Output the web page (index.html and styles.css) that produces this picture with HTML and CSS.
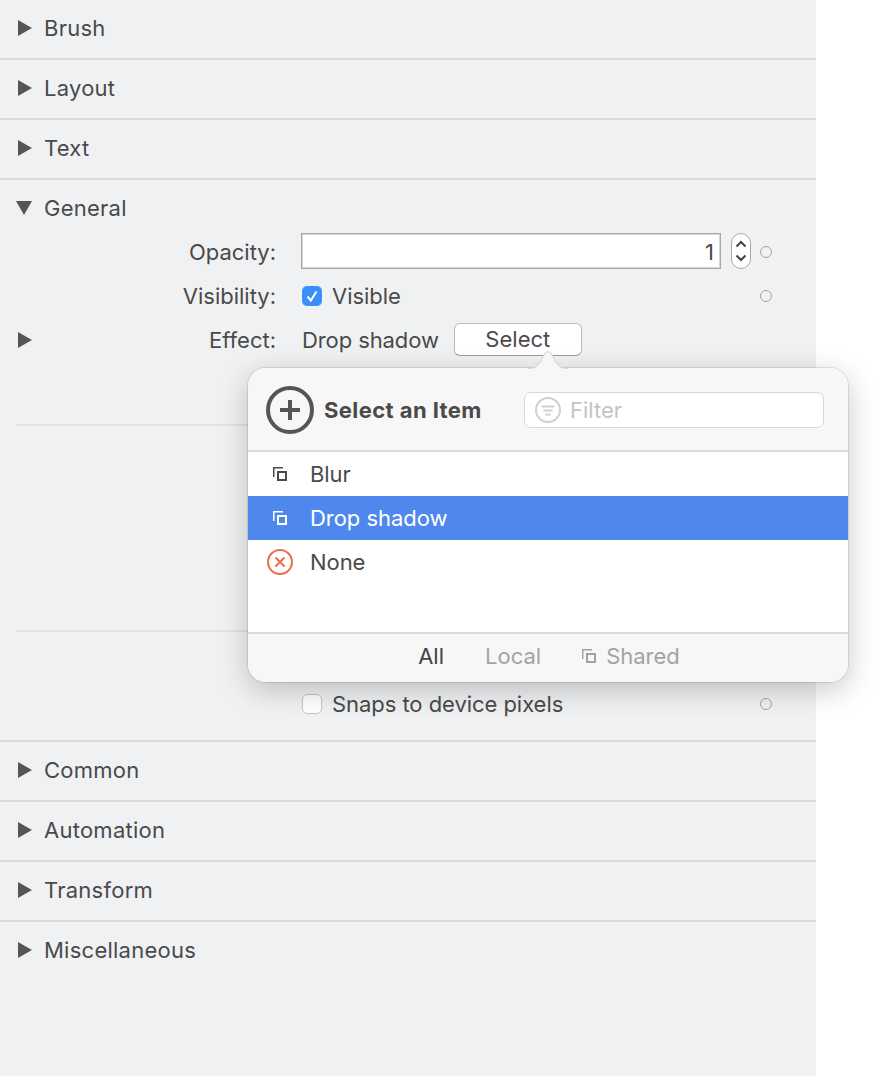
FILE: index.html
```html
<!DOCTYPE html>
<html lang="en">
<head>
<meta charset="utf-8">
<title>Properties</title>
<link rel="stylesheet" href="styles.css">
</head>
<body>
<svg class="defs" width="0" height="0" aria-hidden="true">
  <symbol id="tri-right" viewBox="0 0 14 16"><path d="M0 0L14 8L0 16Z"/></symbol>
  <symbol id="tri-down" viewBox="0 0 16 14"><path d="M0 0H16L8 14Z"/></symbol>
  <symbol id="copy" viewBox="0 0 14 14"><path d="M.75 10V.75H10" fill="none" stroke="currentColor" stroke-width="1.5"/><rect x="5" y="5" width="8" height="8" fill="none" stroke="currentColor" stroke-width="2"/></symbol>
</svg>
<main class="panel">
  <section class="section"><header class="head"><svg class="tri"><use href="#tri-right"/></svg>Brush</header></section>
  <section class="section"><header class="head"><svg class="tri"><use href="#tri-right"/></svg>Layout</header></section>
  <section class="section"><header class="head"><svg class="tri"><use href="#tri-right"/></svg>Text</header></section>
  <section class="section general">
    <header class="head head-open"><svg class="tri-open"><use href="#tri-down"/></svg>General</header>
    <div class="row">
      <span class="label">Opacity:</span>
      <div class="field">1</div>
      <div class="stepper">
        <svg viewBox="0 0 20 36" width="20" height="36"><path d="M5.500 13.500L10 9L14.500 13.500M5.500 22.500L10 27L14.500 22.500" fill="none" stroke="#444" stroke-width="2"/></svg>
      </div>
      <span class="dot"></span>
    </div>
    <div class="row">
      <span class="label">Visibility:</span>
      <span class="check on"><svg viewBox="0 0 20 20" width="20" height="20"><path d="M5.500 10.500L8.800 14.500L14.500 5.500" fill="none" stroke="#fff" stroke-width="2"/></svg></span>
      <span class="check-text">Visible</span>
      <span class="dot"></span>
    </div>
    <div class="row">
      <span class="label label-tri"><svg class="tri tri-in"><use href="#tri-right"/></svg>Effect:</span>
      <span class="value">Drop shadow</span>
      <span class="button">Select</span>
    </div>
    <div class="group group-a"></div>
    <div class="group group-b"></div>
    <div class="row">
      <span class="label"></span>
      <span class="check"></span>
      <span class="check-text">Snaps to device pixels</span>
      <span class="dot"></span>
    </div>
  </section>
  <section class="section"><header class="head"><svg class="tri"><use href="#tri-right"/></svg>Common</header></section>
  <section class="section"><header class="head"><svg class="tri"><use href="#tri-right"/></svg>Automation</header></section>
  <section class="section"><header class="head"><svg class="tri"><use href="#tri-right"/></svg>Transform</header></section>
  <section class="section last"><header class="head"><svg class="tri"><use href="#tri-right"/></svg>Miscellaneous</header></section>
</main>

<aside class="popover">
  <svg class="beak" viewBox="0 0 40 18" width="40" height="18"><path d="M0 18C7 18 9 15 12 12L17 2C18.500 .5 21.500 .5 23 2L28 12C31 15 33 18 40 18Z" fill="#f7f7f7"/><path d="M0 17.500C7 17.500 9 15 12 11.500L17 2C18.500 .5 21.500 .5 23 2L28 11.500C31 15 33 17.500 40 17.500" fill="none" stroke="#d4d4d6"/></svg>
  <header class="pop-head">
    <svg class="add" viewBox="0 0 48 48" width="48" height="48"><circle cx="24" cy="24" r="22" fill="none" stroke="#555" stroke-width="4"/><path d="M24 14V34M14 24H34" stroke="#555" stroke-width="4"/></svg>
    <strong class="pop-title">Select an Item</strong>
    <div class="filter">
      <svg viewBox="0 0 26 26" width="26" height="26"><circle cx="13" cy="13" r="12" fill="none" stroke="#cfcfcf" stroke-width="2"/><path d="M6.500 9.500H19.500M8.500 13.500H17.500M10.500 17.500H15.500" stroke="#cfcfcf" stroke-width="2"/></svg>
      <span>Filter</span>
    </div>
  </header>
  <ul class="pop-list">
    <li class="item"><span class="item-icon"><svg class="copy"><use href="#copy"/></svg></span>Blur</li>
    <li class="item selected"><span class="item-icon"><svg class="copy"><use href="#copy"/></svg></span>Drop shadow</li>
    <li class="item"><span class="item-icon"><svg viewBox="0 0 26 26" width="26" height="26"><circle cx="13" cy="13" r="12" fill="none" stroke="#f0694f" stroke-width="2"/><path d="M8.500 8.500L17.500 17.500M17.500 8.500L8.500 17.500" stroke="#f0694f" stroke-width="2"/></svg></span>None</li>
  </ul>
  <footer class="pop-foot">
    <span class="tab active">All</span>
    <span class="tab">Local</span>
    <span class="tab tab-icon"><svg class="copy"><use href="#copy"/></svg>Shared</span>
  </footer>
</aside>
</body>
</html>
```
FILE: styles.css
```css
* { box-sizing: border-box; }
html, body { margin: 0; padding: 0; background: #fff; }
body {
  position: relative;
  width: 884px;
  height: 1076px;
  overflow: hidden;
  font-family: Inter, "Liberation Sans", sans-serif;
  font-size: 22px;
  color: #4a4a4a;
}
.defs { position: absolute; }
.panel { width: 816px; height: 1076px; background: #f0f1f3; }
.section { border-bottom: 2px solid #d8d9db; }
.section.last { border-bottom: 0; }
.head {
  display: flex;
  align-items: center;
  height: 58px;
  padding: 0 0 2px 18px;
  letter-spacing: .25px;
}
.tri { width: 14px; height: 16px; margin-right: 12px; fill: #555; flex: none; }
.head-open { padding: 6px 0 0 16px; height: 50px; }
.tri-open { width: 16px; height: 14px; margin-right: 12px; fill: #555; flex: none; }
.general { height: 562px; }
.row {
  display: flex;
  align-items: center;
  height: 44px;
  padding-right: 44px;
}
.label { width: 276px; margin-right: 26px; text-align: right; flex: none; }
.label-tri { display: flex; align-items: center; justify-content: flex-end; padding-left: 18px; }
.tri-in { margin-right: auto; }
.value { letter-spacing: -.1px; }
.field {
  width: 420px;
  height: 36px;
  margin: -2px 0 0 -1px;
  padding-right: 6px;
  border: 1px solid #a8a8a8;
  background: #fff;
  box-shadow: inset 0 0 0 1px #d6d6d6;
  text-align: right;
  line-height: 36px;
}
.stepper {
  width: 20px;
  height: 36px;
  margin: -2px 0 0 10px;
  border: 1px solid #a9a9a9;
  border-radius: 10px;
  background: #fff;
  overflow: hidden;
}
.stepper svg { display: block; margin: -1px; }
.dot {
  width: 12px;
  height: 12px;
  margin-left: auto;
  border: 1px solid #a5a5a7;
  border-radius: 50%;
}
.check {
  width: 20px;
  height: 20px;
  border: 1px solid #c4c4c4;
  border-radius: 5px;
  background: #fff;
  flex: none;
}
.check.on { border: 0; background: #3b8ff9; }
.check svg { display: block; }
.check-text { margin-left: 10px; letter-spacing: -.05px; }
.button {
  width: 128px;
  height: 33px;
  margin-left: 15px;
  margin-top: -2px;
  border: 1px solid #b9b9b9;
  border-bottom-color: #9c9c9c;
  border-radius: 6px;
  background: #fff;
  text-align: center;
  line-height: 31px;
}
.group { margin-left: 16px; border-bottom: 2px solid #e3e4e6; }
.group-a { height: 64px; }
.group-b { height: 206px; margin-bottom: 50px; }

.popover {
  position: absolute;
  left: 248px;
  top: 368px;
  width: 600px;
  height: 314px;
  display: flex;
  flex-direction: column;
  border-radius: 18px;
  background: #fff;
  box-shadow: 0 0 0 1px rgba(0,0,0,.1), 0 8px 30px rgba(0,0,0,.22);
}
.beak { position: absolute; left: 280px; top: -17px; }
.pop-head {
  display: flex;
  align-items: center;
  height: 84px;
  padding: 2px 24px 0 18px;
  border-bottom: 2px solid #dcdcdc;
  border-radius: 18px 18px 0 0;
  background: #f7f7f7;
}
.add { flex: none; }
.pop-title { margin-left: 10px; font-weight: 700; letter-spacing: .42px; }
.filter {
  display: flex;
  align-items: center;
  width: 300px;
  height: 36px;
  margin-left: auto;
  padding-left: 10px;
  border: 1px solid #d8d8d8;
  border-radius: 7px;
  background: #fff;
  color: #c4c4c4;
}
.filter span { margin-left: 9px; }
.pop-list { flex: 1; margin: 0; padding: 0; list-style: none; }
.item { display: flex; align-items: center; height: 44px; letter-spacing: -.05px; }
.item.selected { background: #4f88ec; color: #fff; }
.item-icon {
  display: flex;
  align-items: center;
  justify-content: center;
  width: 26px;
  margin: 0 17px 0 19px;
}
.copy { width: 14px; height: 14px; flex: none; }
.pop-foot {
  display: flex;
  align-items: center;
  justify-content: center;
  height: 50px;
  padding: 0 0 5px 2px;
  border-top: 2px solid #dcdcdc;
  border-radius: 0 0 18px 18px;
  background: #f7f7f7;
  gap: 41px;
}
.tab { color: #a3a3a3; }
.tab.active { color: #444; }
.tab-icon { display: flex; align-items: center; gap: 10px; }
```
